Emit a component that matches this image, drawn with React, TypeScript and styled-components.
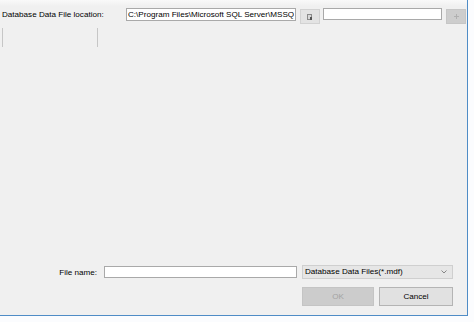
import styled, { createGlobalStyle } from "styled-components";

const Global = createGlobalStyle`
  html, body {
    margin: 0;
    padding: 0;
    background: #fbfcfe;
  }
  body {
    font-family: "Liberation Sans", Arial, sans-serif;
    font-size: 8.1px;
    color: #000;
  }
`;

const Screen = styled.div`
  width: 474px;
  height: 322px;
  overflow: hidden;
  background: #fbfcfe;
`;

const Dialog = styled.div`
  width: 468px;
  height: 316px;
  box-sizing: border-box;
  background: #f0f0f0;
  border-right: 1px solid #4f8cc6;
  border-bottom: 1px solid #4f8cc6;
  display: flex;
  flex-direction: column;
  background-image: linear-gradient(#f9f9f9 0, #f0f0f0 6px);
`;

const TopRow = styled.div`
  display: flex;
  align-items: flex-start;
  margin-top: 8px;
  height: 15px;
`;

const Label = styled.label<{ $width: number; $align?: "left" | "right" }>`
  width: ${(p) => p.$width}px;
  flex: none;
  box-sizing: border-box;
  text-align: ${(p) => p.$align ?? "left"};
  padding: ${(p) => (p.$align === "right" ? "0 7px 0 0" : "0 0 0 2px")};
  line-height: ${(p) => (p.$align === "right" ? 13 : 14)}px;
  white-space: nowrap;
`;

const TextBox = styled.input<{ $width: number; $height?: number }>`
  width: ${(p) => p.$width}px;
  height: ${(p) => p.$height ?? 13}px;
  flex: none;
  box-sizing: border-box;
  margin: 0;
  padding: 0 1px;
  border: 1px solid #a9a9a9;
  background: #fff;
  font: inherit;
  color: #000;
  outline: none;
  overflow: hidden;
`;

const SmallButton = styled.button<{ $disabled?: boolean }>`
  width: 20px;
  height: 15px;
  flex: none;
  margin: 1px 0 0 4px;
  padding: 0;
  box-sizing: border-box;
  border: 1px solid ${(p) => (p.$disabled ? "#c6c6c6" : "#d2d2d2")};
  background: ${(p) => (p.$disabled ? "#cdcdcd" : "#e3e3e3")};
  display: flex;
  align-items: center;
  justify-content: center;
`;

const TreeFrame = styled.div`
  width: 96px;
  height: 19px;
  margin: 5px 0 0 2px;
  box-sizing: border-box;
  border-left: 1px solid #c6c6c6;
  border-right: 1px solid #c6c6c6;
`;

const Spacer = styled.div`
  flex: 1;
`;

const FileRow = styled.div`
  display: flex;
  align-items: flex-start;
  height: 12px;
`;

const Combo = styled.div`
  width: 151px;
  height: 14px;
  margin: -1px 0 0 5px;
  box-sizing: border-box;
  border: 1px solid #cfcfcf;
  background: #e6e6e6;
  display: flex;
  align-items: center;
  justify-content: space-between;
  padding: 0 5px 0 2px;
  line-height: 12px;
`;

const ButtonRow = styled.div`
  display: flex;
  gap: 5px;
  margin: 9px 0 9px 302px;
`;

const DialogButton = styled.button<{ $disabled?: boolean }>`
  width: ${(p) => (p.$disabled ? 72 : 74)}px;
  height: 19px;
  box-sizing: border-box;
  margin: 0;
  padding: 0;
  font: inherit;
  border: 1px solid ${(p) => (p.$disabled ? "#c4c4c4" : "#b4b4b4")};
  background: ${(p) => (p.$disabled ? "#cccccc" : "#e1e1e1")};
  color: ${(p) => (p.$disabled ? "#a3a3a3" : "#000")};
`;

export default function App() {
  return (
    <Screen>
      <Global />
      <Dialog>
        <TopRow>
          <Label $width={126}>Database Data File location:</Label>
          <TextBox
            $width={170}
            readOnly
            defaultValue="C:\Program Files\Microsoft SQL Server\MSSQL13.MSSQLSERVER\MSSQL\DATA"
          />
          <SmallButton>
            <svg width="6" height="6" viewBox="0 0 6 6">
              <rect x="0.5" y="0.5" width="4" height="5" fill="#d8d8d8" stroke="#8a8a8a" strokeWidth="1" />
              <rect x="3" y="3" width="2" height="3" fill="#555" />
            </svg>
          </SmallButton>
          <TextBox $width={119} $height={12} style={{ marginLeft: 3 }} />
          <SmallButton $disabled>
            <svg width="5" height="5" viewBox="0 0 5 5">
              <path d="M2.5 0v5M0 2.5h5" stroke="#b0b0b0" strokeWidth="1" />
            </svg>
          </SmallButton>
        </TopRow>
        <TreeFrame />
        <Spacer />
        <FileRow>
          <Label $width={104} $align="right">
            File name:
          </Label>
          <TextBox $width={193} $height={12} />
          <Combo>
            <span>Database Data Files(*.mdf)</span>
            <svg width="6" height="4" viewBox="0 0 6 4">
              <path d="M0.5 0.5L3 3L5.5 0.5" fill="none" stroke="#7a7a7a" strokeWidth="0.9" />
            </svg>
          </Combo>
        </FileRow>
        <ButtonRow>
          <DialogButton $disabled>OK</DialogButton>
          <DialogButton>Cancel</DialogButton>
        </ButtonRow>
      </Dialog>
    </Screen>
  );
}
